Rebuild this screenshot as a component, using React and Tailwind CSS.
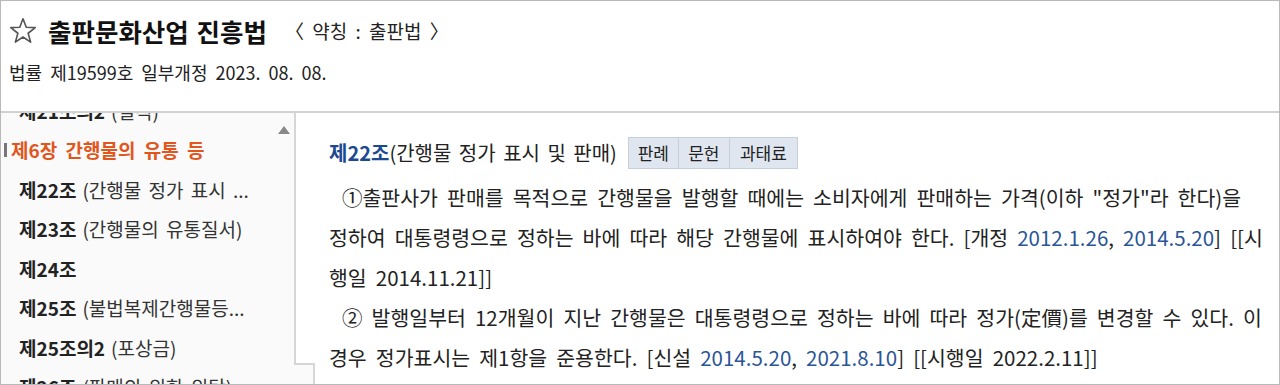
import React from 'react';

const font = { fontFamily: '"Noto Sans CJK KR", "Noto Sans", sans-serif' };

const Star = () => (
  <svg width="30" height="30" viewBox="0 0 24 24" className="shrink-0">
    <polygon
      points="12,2.2 14.6,9 21.8,9.3 16.1,13.8 18.1,20.9 12,16.8 5.9,20.9 7.9,13.8 2.2,9.3 9.4,9"
      fill="none"
      stroke="#555"
      strokeWidth="1.3"
      strokeLinejoin="round"
    />
  </svg>
);

const Item = ({ no, title }) => (
  <div className="h-[39.5px] flex items-center pl-[18px] whitespace-nowrap text-[19px] text-[#333] [word-spacing:3px]">
    <span className="font-bold text-[#222]">{no}</span>
    {title && <span className="ml-[6px]">{title}</span>}
  </div>
);

const Link = ({ children }) => <span className="text-[#2a5597]">{children}</span>;

const App = () => {
  return (
    <div style={font} className="w-[1280px] h-[385px] overflow-hidden border border-[#b9b9b9] bg-white flex flex-col text-[#222]">
      <header className="h-[112px] shrink-0 border-b-2 border-[#d2d2d2] px-[7px] pt-[14px]">
        <div className="flex items-center h-[32px]">
          <Star />
          <h1 className="ml-[10px] text-[25.5px] font-bold text-[#111] [word-spacing:2px]">출판문화산업 진흥법</h1>
          <span className="ml-[18px] text-[19px] text-[#222] [word-spacing:4px]">〈 약칭 : 출판법 〉</span>
        </div>
        <div className="mt-[12px] pl-[1px] text-[18px] text-[#222] [word-spacing:4px]">법률 제19599호 일부개정 2023. 08. 08.</div>
      </header>

      <div className="flex flex-1 min-h-0">
        <div className="relative shrink-0">
          <aside className="relative w-[295px] h-full bg-[#fafafa] border-r-2 border-[#d6d6d6] overflow-hidden">
            <div className="-mt-[22px]">
              <Item no="제21조의2" title="(벌칙)" />
              <div className="h-[39.5px] flex items-center whitespace-nowrap">
                <span className="ml-[3px] w-[3px] h-[14px] bg-[#777]" />
                <span className="ml-[4px] text-[19px] font-semibold text-[#e0561d] [word-spacing:4px]">제6장 간행물의 유통 등</span>
              </div>
              <Item no="제22조" title="(간행물 정가 표시 ..." />
              <Item no="제23조" title="(간행물의 유통질서)" />
              <Item no="제24조" />
              <Item no="제25조" title="(불법복제간행물등..." />
              <Item no="제25조의2" title="(포상금)" />
              <Item no="제26조" title="(판매의 위한 위탁)" />
            </div>
            <div className="absolute top-[13px] right-[4px] w-0 h-0 border-l-[6px] border-r-[6px] border-b-[8px] border-l-transparent border-r-transparent border-b-[#888]" />
          </aside>
          <div className="absolute left-[293px] bottom-0 w-[21px] h-[21px] bg-[#fafafa] border-t-2 border-r-2 border-[#d6d6d6]" />
        </div>

        <main className="flex-1 pl-[33px] pr-[12px] pt-[24px]">
          <div className="flex items-center h-[32px]">
            <span className="text-[20px] whitespace-nowrap [word-spacing:3px]">
              <span className="font-bold text-[#1c4a92]">제22조</span>(간행물 정가 표시 및 판매)
            </span>
            <div className="ml-[11px] flex h-[32px] border border-[#c6d0dc] bg-[#dfe6ef] text-[17px] text-[#222]">
              <span className="w-[50px] flex items-center justify-center border-r border-[#c6d0dc]">판례</span>
              <span className="w-[51px] flex items-center justify-center border-r border-[#c6d0dc]">문헌</span>
              <span className="w-[67px] flex items-center justify-center">과태료</span>
            </div>
          </div>

          <div className="mt-[8px] text-[20.5px] leading-[40px] whitespace-nowrap [word-spacing:4.5px] text-[#222]">
            <p className="indent-[13px]">
              ①출판사가 판매를 목적으로 간행물을 발행할 때에는 소비자에게 판매하는 가격(이하 "정가"라 한다)을
              <br />
              정하여 대통령령으로 정하는 바에 따라 해당 간행물에 표시하여야 한다. [개정 <Link>2012.1.26</Link>, <Link>2014.5.20</Link>] [[시
              <br />
              행일 2014.11.21]]
            </p>
            <p className="indent-[13px]">
              ② 발행일부터 12개월이 지난 간행물은 대통령령으로 정하는 바에 따라 정가(定價)를 변경할 수 있다. 이
              <br />
              경우 정가표시는 제1항을 준용한다. [신설 <Link>2014.5.20</Link>, <Link>2021.8.10</Link>] [[시행일 2022.2.11]]
            </p>
          </div>
        </main>
      </div>
    </div>
  );
};

export default App;
